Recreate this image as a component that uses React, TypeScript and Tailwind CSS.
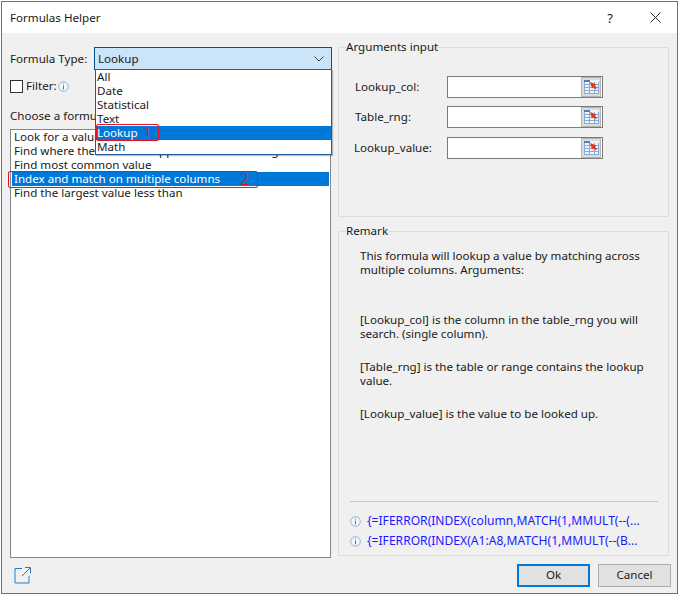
const font = "font-['Noto_Sans',sans-serif]"

function InfoIcon() {
  return (
    <svg width="11" height="11" viewBox="0 0 11 11" className="shrink-0">
      <circle cx="5.5" cy="5.5" r="4.8" fill="#f2f7fc" stroke="#8fb2d6" />
      <rect x="5" y="2.5" width="1" height="1" fill="#3f7fc0" />
      <rect x="5" y="4.5" width="1" height="4" fill="#3f7fc0" />
    </svg>
  )
}

function RangeButton() {
  return (
    <div className="w-5 h-5 bg-[#dcdcdc] border border-[#b4b4b4] flex items-center justify-center">
      <svg width="15" height="14" viewBox="0 0 15 14">
        <rect x="0" y="0" width="15" height="14" fill="#eef4fb" />
        <rect x="0" y="0" width="6" height="2" fill="#4f7fb5" />
        <path d="M0 4.5h15M0 7.5h15M0 10.5h15M0 13.5h15M0.5 2v12M5.5 2v12M10.5 2v12M14.5 2v12" stroke="#86abd4" strokeWidth="1" />
        <path d="M6 2l6.5 2.5-1.6 1.2 2.1 2.1-1.5 1.5-2.1-2.1L8 8.5z" fill="#e5341f" />
      </svg>
    </div>
  )
}

function ArgRow({ label, indent }: { label: string; indent: string }) {
  return (
    <div className="flex items-center h-[22px]">
      <div className="w-[92px]">
        <span className={indent}>{label}</span>
      </div>
      <div className="w-[156px] h-[22px] bg-white border border-[#7a7a7a] flex items-center justify-end pr-px">
        <RangeButton />
      </div>
    </div>
  )
}

export default function App() {
  return (
    <div className={`${font} w-[680px] h-[596px] bg-white text-[11.6px] leading-[14px] text-[#1a1a1a] overflow-hidden pt-px pl-px pr-[2px] pb-[2px]`}>
      <div className="relative w-full h-full bg-[#f0f0f0] border border-[#707070] flex flex-col">
        <div className="h-[31px] bg-white flex items-center justify-between pl-[8px] shrink-0">
          <span>Formulas Helper</span>
          <div className="flex items-center">
            <span className="w-[46px] text-center text-[13px]">?</span>
            <div className="w-[44px] flex justify-center">
              <svg width="11" height="11" viewBox="0 0 11 11">
                <path d="M0.5 0.5L10.5 10.5M10.5 0.5L0.5 10.5" stroke="#222" strokeWidth="1" />
              </svg>
            </div>
          </div>
        </div>

        <div className="flex flex-1 pl-[8px] pr-[8px]">
          <div className="w-[321px] flex flex-col pt-[14px]">
            <div className="flex items-center h-[23px]">
              <span className="w-[84px] shrink-0">Formula Type:</span>
              <div className="w-[238px] h-[23px] shrink-0 bg-[#cce4f7] border border-[#005499] flex items-center justify-between pl-[3px] pr-[7px]">
                <span>Lookup</span>
                <svg width="10" height="6" viewBox="0 0 10 6">
                  <path d="M0.5 0.5L5 5L9.5 0.5" fill="none" stroke="#444" />
                </svg>
              </div>
            </div>
            <div className="flex items-center h-[14px] mt-[9px]">
              <div className="w-[13px] h-[13px] bg-white border border-[#333]" />
              <span className="ml-[3px]">Filter:</span>
              <span className="ml-px"><InfoIcon /></span>
            </div>
            <div className="mt-[16px]">Choose a formula:</div>
            <div className="mt-[6px] h-[429px] bg-white border border-[#82878c] px-px">
              {[
                "Look for a value and return it",
                "Find where the character appears first in a string",
                "Find most common value",
                "Index and match on multiple columns",
                "Find the largest value less than",
              ].map((t, i) => (
                <div key={t} className={`h-[14px] pl-[2px] ${i === 3 ? "bg-[#0078d7] text-white" : ""}`}>
                  {t}
                </div>
              ))}
            </div>
          </div>

          <div className="flex-1 ml-[7px] flex flex-col pt-[7px]">
            <fieldset className="h-[177px] border border-[#dcdcdc] px-[8px]">
              <legend className="ml-[-1px] px-0 bg-[#f0f0f0]">Arguments input</legend>
              <div className="flex flex-col pt-[22px] pl-[8px]">
                <ArgRow label="Lookup_col:" indent="" />
                <div className="h-[8px]" />
                <ArgRow label="Table_rng:" indent="" />
                <div className="h-[9px]" />
                <ArgRow label="Lookup_value:" indent="-ml-px" />
              </div>
            </fieldset>
            <fieldset className="mt-[7px] h-[332px] border border-[#dcdcdc] px-[8px] flex flex-col">
              <legend className="ml-[-1px] px-0 bg-[#f0f0f0]">Remark</legend>
              <div className="h-[263px] pl-[13px] pr-[10px] pt-[11px]">
                <p>This formula will lookup a value by matching across multiple columns. Arguments:</p>
                <p className="mt-[36px]">[Lookup_col] is the column in the table_rng you will search. (single column).</p>
                <p className="mt-[19px]">[Table_rng] is the table or range contains the lookup value.</p>
                <p className="mt-[19px]">[Lookup_value] is the value to be looked up.</p>
              </div>
              <div className="ml-[3px] mr-[2px] border-t border-[#c8c8c8] pt-[12px] flex flex-col gap-[6px] text-[#1a1aff] text-[12.1px]">
                <div className="flex items-center gap-[6px] h-[14px]"><InfoIcon />{"{=IFERROR(INDEX(column,MATCH(1,MMULT(--(..."}</div>
                <div className="flex items-center gap-[6px] h-[14px]"><InfoIcon />{"{=IFERROR(INDEX(A1:A8,MATCH(1,MMULT(--(B..."}</div>
              </div>
            </fieldset>
          </div>
        </div>

        <div className="h-[36px] shrink-0 flex items-center justify-between pl-[12px] pr-[6px] pb-[2px]">
          <svg width="18" height="18" viewBox="0 0 18 18">
            <path d="M8 2.5H1v14.5h14V10" fill="none" stroke="#2a78c4" strokeWidth="1" />
            <path d="M8 10L16 2M11 1.5h5.5V7" fill="none" stroke="#2a78c4" strokeWidth="1" />
          </svg>
          <div className="flex gap-[8px]">
            <button className="w-[73px] h-[23px] bg-[#e1e1e1] border-2 border-[#0078d7]">Ok</button>
            <button className="w-[73px] h-[23px] bg-[#e1e1e1] border border-[#adadad]">Cancel</button>
          </div>
        </div>

        {/* open combo list */}
        <div className="absolute left-[93px] top-[67px] w-[237px] h-[86px] bg-white border border-[#1f5f9f] shadow-[1px_1px_1px_rgba(0,0,0,0.25)]">
          {["All", "Date", "Statistical", "Text", "Lookup", "Math"].map((t) => (
            <div key={t} className={`h-[14px] pl-px ${t === "Lookup" ? "bg-[#0078d7] text-white" : ""}`}>{t}</div>
          ))}
        </div>

        {/* red annotations */}
        <div className="absolute left-[94px] top-[122px] w-[63px] h-[17px] border border-[#e81123] rounded-[2px]">
          <span className="absolute left-[46px] top-0 text-[#e81123] text-[15px] leading-[15px] font-light">1</span>
        </div>
        <div className="absolute left-[6px] top-[169px] w-[250px] h-[17px] border border-[#e81123] rounded-[2px]">
          <span className="absolute left-[231px] top-0 text-[#e81123] text-[16px] leading-[15px] font-light">2</span>
        </div>
      </div>
    </div>
  )
}
